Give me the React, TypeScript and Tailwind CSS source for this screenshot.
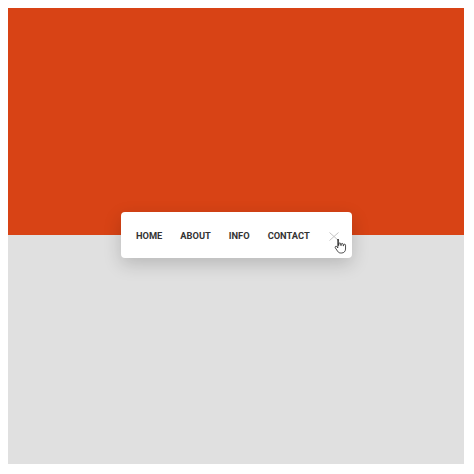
export default function App() {
  return (
    <div className="w-[474px] h-[474px] bg-white p-2 font-['Roboto',sans-serif]">
      <div className="w-[456px] h-[456px] flex flex-col relative">
        <div className="h-[227px] bg-[#d84315]" />
        <div className="flex-1 bg-[#e0e0e0]" />
        <div className="absolute left-[113px] top-[204px] w-[231px] h-[46px] bg-white rounded-[4px] shadow-[0_6px_18px_rgba(0,0,0,0.18)] flex items-center pl-[15px] pt-[2px]">
          <nav className="flex items-center gap-[18px] text-[9.3px] font-bold text-[#333]">
            <span>HOME</span>
            <span>ABOUT</span>
            <span>INFO</span>
            <span>CONTACT</span>
          </nav>
          <div className="relative ml-[19px] w-[10px] h-[9px]">
            <svg viewBox="0 0 10 9" className="w-[10px] h-[9px]">
              <path d="M0.5 0.5 L9.5 8.5 M9.5 0.5 L0.5 8.5" stroke="#c4c4c4" strokeWidth="1" />
            </svg>
            <svg viewBox="0 0 24 24" className="absolute left-[3px] top-[4px] w-[16px] h-[20px]">
              <path
                d="M8 2.5c.9 0 1.6.7 1.6 1.6v7.2l.6-.1V8.9c0-.9.7-1.5 1.5-1.5s1.5.6 1.5 1.5v2.3l.6.1v-1.6c0-.9.7-1.5 1.5-1.5s1.5.6 1.5 1.5v2l.6.1v-1c0-.9.7-1.5 1.5-1.5s1.4.6 1.4 1.5v5.8c0 3.2-2.4 5.9-5.7 5.9h-1.6c-2 0-3.4-.9-4.5-2.5l-3.6-5.3c-.5-.8-.3-1.7.4-2.1.7-.4 1.5-.2 2 .4l1.4 1.9V4.1c0-.9.7-1.6 1.6-1.6z"
                fill="#fff"
                stroke="#222"
                strokeWidth="1.2"
                strokeLinejoin="round"
              />
            </svg>
          </div>
        </div>
      </div>
    </div>
  );
}
